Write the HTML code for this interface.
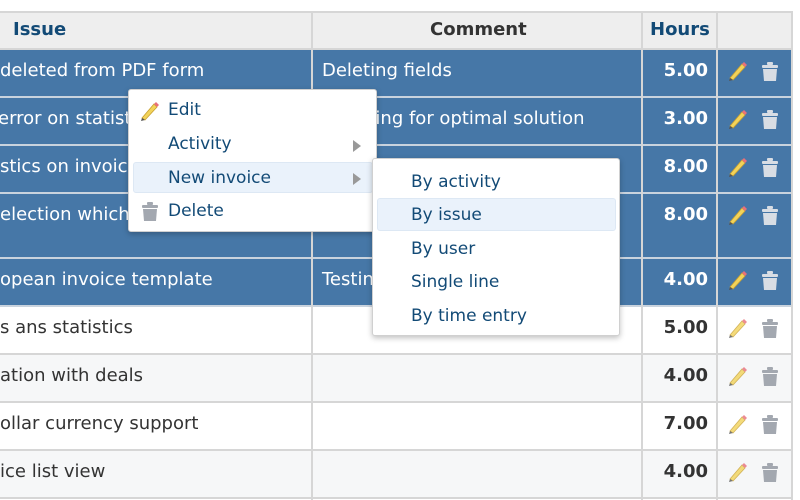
<!DOCTYPE html>
<html><head><style>
*{margin:0;padding:0;box-sizing:border-box}
body{width:800px;height:500px;background:#fff;position:relative;overflow:hidden;font-family:"DejaVu Sans","Liberation Sans",sans-serif;font-size:18px;color:#333}
.r{position:absolute;left:0;width:793px;border-bottom:2px solid #d6d6d6}
.b{background:#4677a7;border-bottom-color:#c9d3de}
.v{position:absolute;top:11px;bottom:0;width:2px;background:#d6d6d6}
.t{position:absolute;white-space:nowrap;line-height:22px}
.w{color:#fff}
.h{font-weight:bold;right:92px;text-align:right}
.menu{position:absolute;background:#fff;border:1px solid #d0d0d0;border-radius:3px;box-shadow:0 2px 6px rgba(0,0,0,.25)}
.mi{position:absolute;color:#124a76;white-space:nowrap;font-size:17px}
.hl{position:absolute;background:#eaf2fb;border:1px solid #dde8f4;border-radius:3px}
.arr{position:absolute;width:0;height:0;border-top:6px solid transparent;border-bottom:6px solid transparent;border-left:8px solid #999}
</style></head><body>
<div class="r" style="top:11px;height:39px;background:#eee;border-top:2px solid #d6d6d6"></div>
<div class="t" style="left:13px;top:19px;font-weight:bold;color:#124a76">Issue</div>
<div class="t" style="left:430px;top:19px;font-weight:bold;color:#333">Comment</div>
<div class="t" style="left:650px;top:19px;font-weight:bold;color:#124a76">Hours</div>

<div class="r b" style="top:50px;height:48px"></div>
<div class="r b" style="top:98px;height:48px"></div>
<div class="r b" style="top:146px;height:48px"></div>
<div class="r b" style="top:194px;height:65px"></div>
<div class="r b" style="top:259px;height:48px"></div>
<div class="r" style="top:307px;height:48px"></div>
<div class="r" style="top:355px;height:48px;background:#f6f7f8"></div>
<div class="r" style="top:403px;height:48px"></div>
<div class="r" style="top:451px;height:48px;background:#f6f7f8"></div>

<div class="v" style="left:311px"></div>
<div class="v" style="left:641px"></div>
<div class="v" style="left:716px"></div>
<div class="v" style="left:791px"></div>

<div class="t w" style="left:0;top:60px">deleted from PDF form</div>
<div class="t w" style="left:322px;top:60px">Deleting fields</div>
<div class="t w" style="left:-2px;top:108px">error on statistics</div>
<div class="t w" style="left:364px;top:108px">hing for optimal solution</div>
<div class="t w" style="left:0;top:156px">stics on invoice</div>
<div class="t w" style="left:0;top:204px">election which</div>
<div class="t w" style="left:0;top:269px">opean invoice template</div>
<div class="t w" style="left:322px;top:269px">Testing</div>
<div class="t" style="left:0;top:317px">s ans statistics</div>
<div class="t" style="left:0;top:365px">ation with deals</div>
<div class="t" style="left:0;top:413px">ollar currency support</div>
<div class="t" style="left:0;top:461px">ice list view</div>

<div class="t h w" style="top:60px">5.00</div>
<div class="t h w" style="top:108px">3.00</div>
<div class="t h w" style="top:156px">8.00</div>
<div class="t h w" style="top:204px">8.00</div>
<div class="t h w" style="top:269px">4.00</div>
<div class="t h" style="top:317px">5.00</div>
<div class="t h" style="top:365px">4.00</div>
<div class="t h" style="top:413px">7.00</div>
<div class="t h" style="top:461px">4.00</div>

<svg width="800" height="500" style="position:absolute;left:0;top:0">
<defs>
<g id="p"><path d="M1 17 L13 3 L16 6 L4 19 Z" fill="#f2d35a" stroke="#c8a030" stroke-width=".8"/><path d="M13 3 L15 1 L18 4 L16 6 Z" fill="#e8707a"/><path d="M1 17 L0 20 L4 19Z" fill="#555"/></g>
<g id="c"><rect x="1" y="3" width="16" height="3" rx="1"/><rect x="6" y="0" width="6" height="3" rx="1"/><path d="M2 7 H16 L15 19 H3Z"/></g>
</defs>
<g>
<use href="#p" x="729" y="61"/><use href="#p" x="729" y="109"/><use href="#p" x="729" y="157"/><use href="#p" x="729" y="205"/><use href="#p" x="729" y="270"/>
<use href="#p" x="729" y="318" opacity=".8"/><use href="#p" x="729" y="366" opacity=".8"/><use href="#p" x="729" y="414" opacity=".8"/><use href="#p" x="729" y="462" opacity=".8"/>
</g>
<g fill="#d8dde4">
<use href="#c" x="761" y="62"/><use href="#c" x="761" y="110"/><use href="#c" x="761" y="158"/><use href="#c" x="761" y="206"/><use href="#c" x="761" y="271"/>
</g>
<g fill="#a3a8b0">
<use href="#c" x="761" y="319"/><use href="#c" x="761" y="367"/><use href="#c" x="761" y="415"/><use href="#c" x="761" y="463"/>
</g>
</svg>

<div class="menu" style="left:128px;top:89px;width:249px;height:143px">
<div class="hl" style="left:4px;top:72px;width:240px;height:31px"></div>
<svg width="24" height="24" style="position:absolute;left:11px;top:10px"><use href="#p" x="1" y="1"/></svg>
<svg width="22" height="22" style="position:absolute;left:11px;top:112px" fill="#a3a8b0"><use href="#c" x="1" y="0"/></svg>
<div class="mi" style="left:39px;top:10px">Edit</div>
<div class="mi" style="left:39px;top:44px">Activity</div>
<div class="arr" style="left:224px;top:50px"></div>
<div class="mi" style="left:39px;top:78px">New invoice</div>
<div class="arr" style="left:224px;top:83px"></div>
<div class="mi" style="left:39px;top:111px">Delete</div>
</div>

<div class="menu" style="left:372px;top:158px;width:248px;height:178px">
<div class="hl" style="left:4px;top:39px;width:239px;height:33px"></div>
<div class="mi" style="left:38px;top:13px">By activity</div>
<div class="mi" style="left:38px;top:46px">By issue</div>
<div class="mi" style="left:38px;top:80px">By user</div>
<div class="mi" style="left:38px;top:113px">Single line</div>
<div class="mi" style="left:38px;top:147px">By time entry</div>
</div>
</body></html>
